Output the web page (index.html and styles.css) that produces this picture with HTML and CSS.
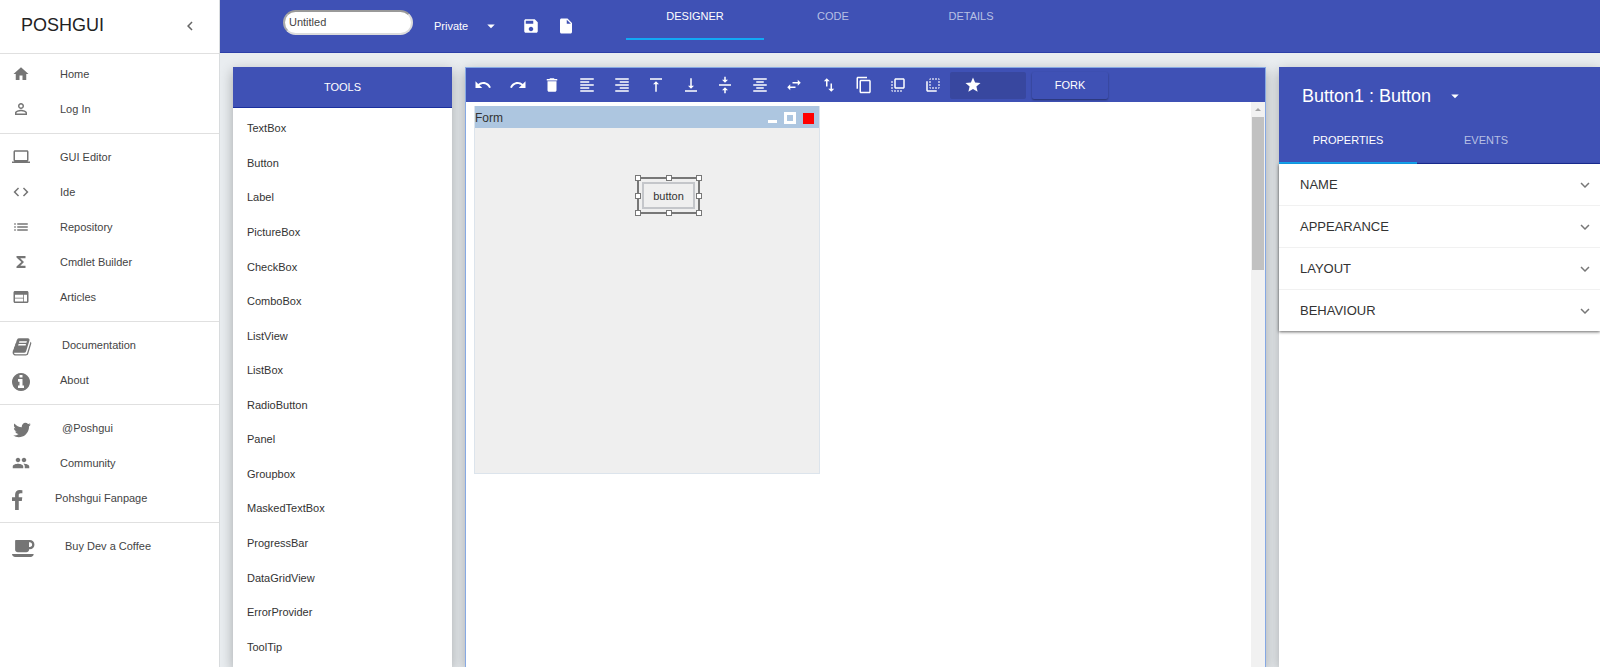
FILE: index.html
```
<!DOCTYPE html>
<html lang="en">
<head>
    <meta charset="UTF-8">
    <meta name="viewport" content="width=device-width, initial-scale=1.0">
    <title>POSHGUI</title>
    <link rel="stylesheet" href="styles.css">
</head>
<body>

    <aside class="sidebar">
        <div class="brand">
            <h1>POSHGUI</h1>
            <button class="icon-btn" aria-label="Collapse menu"><svg class="icon" viewBox="0 0 24 24"><path d="M15.41 7.41L14 6l-6 6 6 6 1.41-1.41L10.83 12z"/></svg></button>
        </div>
        <nav>
            <div class="nav-group nav-first">
                <a href="#"><svg class="icon" viewBox="0 0 24 24"><path d="M10 20v-6h4v6h5v-8h3L12 3 2 12h3v8z"/></svg>Home</a>
                <a href="#"><svg class="icon" viewBox="0 0 24 24"><path d="M12 5.9a2.1 2.1 0 1 1 0 4.2 2.1 2.1 0 0 1 0-4.2m0 9c2.97 0 6.1 1.46 6.1 2.1v1.1H5.9V17c0-.64 3.13-2.1 6.1-2.1M12 4C9.79 4 8 5.79 8 8s1.79 4 4 4 4-1.79 4-4-1.79-4-4-4zm0 9c-2.67 0-8 1.34-8 4v3h16v-3c0-2.66-5.33-4-8-4z"/></svg>Log In</a>
            </div>
            <div class="nav-group">
                <a href="#"><svg class="icon" viewBox="0 0 24 24"><path d="M20 18c1.1 0 1.99-.9 1.99-2L22 5c0-1.1-.9-2-2-2H4c-1.1 0-2 .9-2 2v11c0 1.1.9 2 2 2H0v2h24v-2h-4zM4 5h16v11H4V5z"/></svg>GUI Editor</a>
                <a href="#"><svg class="icon" viewBox="0 0 24 24"><path d="M9.4 16.6L4.8 12l4.6-4.6L8 6l-6 6 6 6 1.4-1.4zm5.2 0l4.6-4.6-4.6-4.6L16 6l6 6-6 6-1.4-1.4z"/></svg>Ide</a>
                <a href="#"><svg class="icon" viewBox="0 0 24 24"><path d="M3 13h2v-2H3v2zm0 4h2v-2H3v2zm0-8h2V7H3v2zm4 4h14v-2H7v2zm0 4h14v-2H7v2zM7 7v2h14V7H7z"/></svg>Repository</a>
                <a href="#"><svg class="icon" viewBox="0 0 24 24"><path d="M18 4H6v2l6.5 6L6 18v2h12v-3h-7l5-5-5-5h7z"/></svg>Cmdlet Builder</a>
                <a href="#"><svg class="icon" viewBox="0 0 24 24"><path d="M20 4H4c-1.1 0-1.99.9-1.99 2L2 18c0 1.1.9 2 2 2h16c1.1 0 2-.9 2-2V6c0-1.1-.9-2-2-2zm-5 14H4v-4h11v4zm0-5H4V9h11v4zm5 5h-4V9h4v9z"/></svg>Articles</a>
            </div>
            <div class="nav-group">
                <a href="#"><svg class="icon fa fa-book" viewBox="50 100 1700 1600"><path d="M1703 478q40 57 18 129l-275 906q-19 64-76.5 107.5t-122.5 43.5h-923q-77 0-148.5-53.5t-99.5-131.5q-24-67-2-127 0-4 3-27t4-37q1-8-3-21.5t-3-19.5q2-11 8-21t16.5-23.5 16.5-23.5q23-38 45-91.5t30-91.5q3-10 .5-30t-.5-28q3-11 17-28t17-23q21-36 42-92t25-90q1-9-2.5-32t.5-28q4-13 22-30.5t22-22.5q19-26 42.5-84.5t27.5-96.5q1-8-3-25.5t-2-26.5q2-8 9-18t18-23 17-21q8-12 16.5-30.5t15-35 16-36 19.5-32 26.5-23.5 36-11.5 47.5 5.5l-1 3q38-9 51-9h761q74 0 114 56t18 130l-274 906q-36 119-71.5 153.5t-128.5 34.5h-869q-27 0-38 15-11 16-1 43 24 70 144 70h923q29 0 56-15.5t35-41.5l300-987q7-22 5-57 38 15 59 43zm-1064 2q-4 13 2 22.5t20 9.5h608q13 0 25.5-9.5t16.5-22.5l21-64q4-13-2-22.5t-20-9.5h-608q-13 0-25.5 9.5t-16.5 22.5zm-83 256q-4 13 2 22.5t20 9.5h608q13 0 25.5-9.5t16.5-22.5l21-64q4-13-2-22.5t-20-9.5h-608q-13 0-25.5 9.5t-16.5 22.5z"/></svg>Documentation</a>
                <a href="#"><svg class="icon fa" viewBox="128 128 1536 1536"><path d="M1152 1376v-160q0-14-9-23t-23-9h-96v-512q0-14-9-23t-23-9h-320q-14 0-23 9t-9 23v160q0 14 9 23t23 9h96v320h-96q-14 0-23 9t-9 23v160q0 14 9 23t23 9h448q14 0 23-9t9-23zm-128-896v-160q0-14-9-23t-23-9h-192q-14 0-23 9t-9 23v160q0 14 9 23t23 9h192q14 0 23-9t9-23zm640 416q0 209-103 385.5t-279.5 279.5-385.5 103-385.5-103-279.5-279.5-103-385.5 103-385.5 279.5-279.5 385.5-103 385.5 103 279.5 279.5 103 385.5z"/></svg>About</a>
            </div>
            <div class="nav-group">
                <a href="#"><svg class="icon fa fa-twitter" viewBox="0 0 1792 1792"><path d="M1684 408q-67 98-162 167 1 14 1 42 0 130-38 259.5t-115.5 248.5-184.5 210.5-258 146-323 54.5q-271 0-496-145 35 4 78 4 225 0 401-138-105-2-188-64.5t-114-159.5q33 5 61 5 43 0 85-11-112-23-185.5-111.5t-73.5-205.5v-4q68 38 146 41-66-44-105-115t-39-154q0-88 44-163 121 149 294.5 238.5t371.5 99.5q-8-38-8-74 0-134 94.5-228.5t228.5-94.5q140 0 236 102 109-21 205-78-37 115-142 178 93-10 186-50z"/></svg>@Poshgui</a>
                <a href="#"><svg class="icon" viewBox="0 0 24 24"><path d="M16 11c1.66 0 2.99-1.34 2.99-3S17.66 5 16 5c-1.66 0-3 1.34-3 3s1.34 3 3 3zm-8 0c1.66 0 2.99-1.34 2.99-3S9.66 5 8 5C6.34 5 5 6.34 5 8s1.34 3 3 3zm0 2c-2.33 0-7 1.17-7 3.5V19h14v-2.5c0-2.33-4.67-3.5-7-3.5zm8 0c-.29 0-.62.02-.97.05 1.16.84 1.97 1.97 1.97 3.45V19h6v-2.5c0-2.33-4.67-3.5-7-3.5z"/></svg>Community</a>
                <a href="#"><svg class="icon fa fa-facebook" viewBox="479 0 1080 1664"><path d="M1343 12v264h-157q-86 0-116 36t-30 108v189h293l-39 296h-254v759h-306v-759h-255v-296h255v-218q0-186 104-288.5t277-102.5q147 0 228 12z"/></svg>Pohshgui Fanpage</a>
            </div>
            <div class="nav-group">
                <a href="#"><svg class="icon fa fa-coffee" viewBox="0 256 1900 1408"><path d="M1664 640q0-80-56-136t-136-56h-64v384h64q80 0 136-56t56-136zm-1664 768h1792q0 106-75 181t-181 75h-1280q-106 0-181-75t-75-181zm1856-768q0 159-112.5 271.5t-271.5 112.5h-64v32q0 92-66 158t-158 66h-704q-92 0-158-66t-66-158v-736q0-26 19-45t45-19h1152q159 0 271.5 112.5t112.5 271.5z"/></svg>Buy Dev a Coffee</a>
            </div>
        </nav>
    </aside>

    <div class="page">
        <header class="topbar">
            <div class="project">
                <input class="project-name" type="text" value="Untitled" aria-label="Project name">
                <div class="dropdown visibility">
                    <select aria-label="Visibility"><option>Private</option><option>Public</option></select>
                    <svg class="icon" viewBox="0 0 24 24"><path d="M7 10l5 5 5-5z"/></svg>
                </div>
                <div class="file-actions">
                    <button class="icon-btn" aria-label="Save"><svg class="icon" viewBox="0 0 24 24"><path d="M17 3H5c-1.11 0-2 .9-2 2v14c0 1.1.89 2 2 2h14c1.1 0 2-.9 2-2V7l-4-4zm-5 16c-1.66 0-3-1.34-3-3s1.34-3 3-3 3 1.34 3 3-1.34 3-3 3zm3-10H5V5h10v4z"/></svg></button>
                    <button class="icon-btn" aria-label="New file"><svg class="icon" viewBox="0 0 24 24"><path d="M6 2c-1.1 0-1.99.9-1.99 2L4 20c0 1.1.89 2 2 2h12c1.1 0 2-.9 2-2V8l-6-6H6zm7 7V3.5L18.5 9H13z"/></svg></button>
                </div>
            </div>
            <div class="tabs">
                <button class="tab active">DESIGNER</button>
                <button class="tab">CODE</button>
                <button class="tab">DETAILS</button>
            </div>
        </header>

        <main class="workspace">
            <section class="panel tools">
                <h2>TOOLS</h2>
                <ul>
                    <li>TextBox</li>
                    <li>Button</li>
                    <li>Label</li>
                    <li>PictureBox</li>
                    <li>CheckBox</li>
                    <li>ComboBox</li>
                    <li>ListView</li>
                    <li>ListBox</li>
                    <li>RadioButton</li>
                    <li>Panel</li>
                    <li>Groupbox</li>
                    <li>MaskedTextBox</li>
                    <li>ProgressBar</li>
                    <li>DataGridView</li>
                    <li>ErrorProvider</li>
                    <li>ToolTip</li>
                </ul>
            </section>

            <section class="panel designer">
                <div class="toolbar">
                    <div class="toolbar-icons">
                        <button class="icon-btn" aria-label="Undo"><svg class="icon" viewBox="0 0 24 24"><path d="M12.5 8c-2.65 0-5.05.99-6.9 2.6L2 7v9h9l-3.62-3.62c1.39-1.16 3.16-1.88 5.12-1.88 3.54 0 6.55 2.31 7.6 5.5l2.37-.78C21.08 11.03 17.15 8 12.5 8z"/></svg></button>
                        <button class="icon-btn" aria-label="Redo"><svg class="icon" viewBox="0 0 24 24"><path d="M18.4 10.6C16.55 8.99 14.15 8 11.5 8c-4.65 0-8.58 3.03-9.96 7.22L3.9 16c1.05-3.19 4.05-5.5 7.6-5.5 1.95 0 3.73.72 5.12 1.88L13 16h9V7l-3.6 3.6z"/></svg></button>
                        <button class="icon-btn" aria-label="Delete"><svg class="icon" viewBox="0 0 24 24"><path d="M6 19c0 1.1.9 2 2 2h8c1.1 0 2-.9 2-2V7H6v12zM19 4h-3.5l-1-1h-5l-1 1H5v2h14V4z"/></svg></button>
                        <button class="icon-btn" aria-label="Align left"><svg class="icon" viewBox="0 0 24 24"><path d="M15 15H3v2h12v-2zm0-8H3v2h12V7zM3 13h18v-2H3v2zm0 8h18v-2H3v2zM3 3v2h18V3H3z"/></svg></button>
                        <button class="icon-btn" aria-label="Align right"><svg class="icon" viewBox="0 0 24 24"><path d="M3 21h18v-2H3v2zm6-4h12v-2H9v2zm-6-4h18v-2H3v2zm6-4h12V7H9v2zM3 3v2h18V3H3z"/></svg></button>
                        <button class="icon-btn" aria-label="Align top"><svg class="icon" viewBox="0 0 24 24"><path d="M8 11h3v10h2V11h3l-4-4-4 4zM4 3v2h16V3H4z"/></svg></button>
                        <button class="icon-btn" aria-label="Align bottom"><svg class="icon" viewBox="0 0 24 24"><path d="M16 13h-3V3h-2v10H8l4 4 4-4zM4 19v2h16v-2H4z"/></svg></button>
                        <button class="icon-btn" aria-label="Align middle"><svg class="icon" viewBox="0 0 24 24"><path d="M8 19h3v4h2v-4h3l-4-4-4 4zm8-14h-3V1h-2v4H8l4 4 4-4zM4 11v2h16v-2H4z"/></svg></button>
                        <button class="icon-btn" aria-label="Align center"><svg class="icon" viewBox="0 0 24 24"><path d="M7 15v2h10v-2H7zm-4 6h18v-2H3v2zm0-8h18v-2H3v2zm4-6v2h10V7H7zM3 3v2h18V3H3z"/></svg></button>
                        <button class="icon-btn" aria-label="Same width"><svg class="icon" viewBox="0 0 24 24"><path d="M6.99 11L3 15l3.99 4v-3H14v-2H6.99v-3zM21 9l-3.99-4v3H10v2h7.01v3L21 9z"/></svg></button>
                        <button class="icon-btn" aria-label="Same height"><svg class="icon" viewBox="0 0 24 24"><path d="M16 17.01V10h-2v7.01h-3L15 21l4-3.99h-3zM9 3L5 6.99h3V14h2V6.99h3L9 3z"/></svg></button>
                        <button class="icon-btn" aria-label="Copy"><svg class="icon" viewBox="0 0 24 24"><path d="M16 1H4c-1.1 0-2 .9-2 2v14h2V3h12V1zm3 4H8c-1.1 0-2 .9-2 2v14c0 1.1.9 2 2 2h11c1.1 0 2-.9 2-2V7c0-1.1-.9-2-2-2zm0 16H8V7h11v14z"/></svg></button>
                        <button class="icon-btn" aria-label="Bring to front"><svg class="icon" viewBox="0 0 24 24"><path d="M3 13h2v-2H3v2zm0 4h2v-2H3v2zm2 4v-2H3c0 1.1.89 2 2 2zM3 9h2V7H3v2zm12 12h2v-2h-2v2zm4-18H9c-1.11 0-2 .9-2 2v10c0 1.1.89 2 2 2h10c1.1 0 2-.9 2-2V5c0-1.1-.9-2-2-2zm0 12H9V5h10v10zm-8 6h2v-2h-2v2zm-4 0h2v-2H7v2z"/></svg></button>
                        <button class="icon-btn" aria-label="Send to back"><svg class="icon" viewBox="0 0 24 24"><path d="M9 7H7v2h2V7zm0 4H7v2h2v-2zm0-8c-1.11 0-2 .9-2 2h2V3zm4 12h-2v2h2v-2zm6-12v2h2c0-1.1-.9-2-2-2zm-6 0h-2v2h2V3zM9 17v-2H7c0 1.1.89 2 2 2zm10-4h2v-2h-2v2zm0-4h2V7h-2v2zm0 8c1.1 0 2-.9 2-2h-2v2zM5 7H3v12c0 1.1.89 2 2 2h12v-2H5V7zm10-2h2V3h-2v2zm0 12h2v-2h-2v2z"/></svg></button>
                    </div>
                    <button class="tool-btn star" aria-label="Star"><svg class="icon" viewBox="0 0 24 24"><path d="M12 17.27L18.18 21l-1.64-7.03L22 9.24l-7.19-.61L12 2 9.19 8.63 2 9.24l5.46 4.73L5.82 21z"/></svg></button>
                    <button class="tool-btn fork">FORK</button>
                </div>
                <div class="stage">
                    <div class="canvas">
                        <div class="form">
                            <div class="form-title">
                                <span>Form</span>
                                <i class="win-min"></i>
                                <i class="win-max"></i>
                                <i class="win-close"></i>
                            </div>
                            <div class="form-body">
                                <div class="selection">
                                    <button class="form-button">button</button>
                                    <i class="handle t l"></i>
                                    <i class="handle t c"></i>
                                    <i class="handle t r"></i>
                                    <i class="handle m l"></i>
                                    <i class="handle m r"></i>
                                    <i class="handle b l"></i>
                                    <i class="handle b c"></i>
                                    <i class="handle b r"></i>
                                </div>
                            </div>
                        </div>
                    </div>
                    <div class="scrollbar">
                        <div class="scroll-arrow"></div>
                        <div class="scroll-thumb"></div>
                    </div>
                </div>
            </section>

            <section class="panel inspector">
                <div class="inspector-head">
                    <div class="dropdown control-name">
                        <select aria-label="Selected control"><option>Button1 : Button</option><option>Form</option></select>
                        <svg class="icon" viewBox="0 0 24 24"><path d="M7 10l5 5 5-5z"/></svg>
                    </div>
                    <div class="tabs">
                        <button class="tab active">PROPERTIES</button>
                        <button class="tab">EVENTS</button>
                    </div>
                </div>
                <div class="accordion">
                    <button>NAME<svg class="icon" viewBox="0 0 24 24"><path d="M16.59 8.59L12 13.17 7.41 8.59 6 10l6 6 6-6z"/></svg></button>
                    <button>APPEARANCE<svg class="icon" viewBox="0 0 24 24"><path d="M16.59 8.59L12 13.17 7.41 8.59 6 10l6 6 6-6z"/></svg></button>
                    <button>LAYOUT<svg class="icon" viewBox="0 0 24 24"><path d="M16.59 8.59L12 13.17 7.41 8.59 6 10l6 6 6-6z"/></svg></button>
                    <button>BEHAVIOUR<svg class="icon" viewBox="0 0 24 24"><path d="M16.59 8.59L12 13.17 7.41 8.59 6 10l6 6 6-6z"/></svg></button>
                </div>
            </section>
        </main>
    </div>

</body>
</html>
```
FILE: styles.css
```
* {
    box-sizing: border-box;
}
body {
    margin: 0;
    display: flex;
    height: 100vh;
    overflow: hidden;
    font-family: "Liberation Sans", Arial, sans-serif;
    font-size: 11px;
    color: #333;
    background: #e9edf0;
}
h1, h2, ul {
    margin: 0;
    padding: 0;
    font-weight: normal;
}
button, select, input {
    font: inherit;
    color: inherit;
}
button {
    padding: 0;
    border: none;
    background: none;
    cursor: pointer;
}
.icon {
    display: block;
    flex: none;
    width: 18px;
    height: 18px;
    fill: currentColor;
}
.icon-btn {
    display: flex;
    align-items: center;
    justify-content: center;
}

/* sidebar */
.sidebar {
    flex: none;
    width: 220px;
    background: white;
    border-right: 1px solid #d9dcde;
}
.brand {
    display: flex;
    align-items: center;
    justify-content: space-between;
    height: 54px;
    padding: 0 20px 2px 21px;
    border-bottom: 1px solid #e0e0e0;
}
.brand h1 {
    font-size: 18px;
    color: #222;
}
.brand .icon {
    color: #666;
}
.nav-group {
    padding: 6px 0;
    border-bottom: 1px solid #e0e0e0;
}
.nav-first {
    padding-top: 3px;
}
.nav-group:last-child {
    border-bottom: none;
}
.nav-group a {
    display: flex;
    align-items: center;
    gap: 30px;
    height: 35px;
    padding: 0 0 2px 12px;
    color: #444;
    text-decoration: none;
}
.nav-group .icon {
    color: #757575;
}
.nav-group .fa {
    margin-top: 5px;
}
.nav-group .fa-book {
    width: 20px;
}
.nav-group .fa-twitter {
    width: 20px;
    height: 20px;
}
.nav-group .fa-facebook {
    width: 13px;
    height: 20px;
}
.nav-group .fa-coffee {
    width: 23px;
    height: 17px;
}

/* top bar */
.page {
    flex: 1;
    min-width: 0;
    display: flex;
    flex-direction: column;
}
.topbar {
    display: flex;
    flex: none;
    height: 53px;
    padding-left: 63px;
    color: white;
    background: #3f51b5;
    border-bottom: 1px solid #2c3fa8;
}
.project {
    display: flex;
    align-items: center;
}
.project-name {
    align-self: flex-start;
    width: 130px;
    height: 25px;
    margin: 10px 21px 0 0;
    padding: 0 4px 2px;
    border: 2px solid #dcdcdc;
    border-top-color: #999;
    border-left-color: #aaa;
    border-radius: 13px;
    background: white;
    color: #444;
}
.dropdown {
    position: relative;
    display: flex;
    align-items: center;
}
.dropdown select {
    width: 100%;
    padding: 0;
    border: none;
    appearance: none;
    background: transparent;
}
.dropdown option {
    color: #333;
}
.dropdown .icon {
    position: absolute;
    right: 0;
    pointer-events: none;
}
.visibility {
    width: 66px;
}
.file-actions {
    display: flex;
    gap: 17px;
    margin: 0 51px 0 22px;
}
.tabs {
    display: flex;
}
.tab {
    width: 138px;
    height: 40px;
    padding-bottom: 6px;
    color: #b8c0e4;
    border-bottom: 2px solid transparent;
}
.tab.active {
    color: white;
    border-color: #12a8f5;
}

/* workspace */
.workspace {
    flex: 1;
    min-height: 0;
    display: grid;
    grid-template-columns: 219px 1fr 321px;
    gap: 13px;
    padding: 14px 0 0 13px;
}
.panel {
    display: flex;
    flex-direction: column;
    min-height: 0;
    background: white;
    box-shadow: 0 4px 12px rgba(0, 0, 0, 0.3);
}
.tools h2 {
    flex: none;
    height: 41px;
    font-size: 11px;
    line-height: 40px;
    text-align: center;
    color: white;
    background: #3f51b5;
    border-bottom: 1px solid #1a2f9e;
}
.tools ul {
    flex: 1;
    display: flex;
    flex-direction: column;
    padding: 3px 14px;
    list-style: none;
}
.tools li {
    flex: 1;
    display: flex;
    align-items: center;
}

/* designer */
.designer {
    border: 1px solid #86a9e4;
    border-bottom: none;
}
.toolbar {
    display: flex;
    flex: none;
    align-items: center;
    height: 34px;
    color: white;
    background: #3f51b5;
}
.toolbar-icons {
    display: grid;
    grid-template-columns: repeat(14, 1fr);
    width: 484px;
}
.tool-btn {
    width: 76px;
    height: 27px;
    border-radius: 2px;
}
.star {
    padding-left: 14px;
    margin-right: 6px;
    background: #38479f;
}
.fork {
    box-shadow: 0 1px 2px rgba(0, 0, 0, 0.4);
}
.stage {
    flex: 1;
    min-height: 0;
    display: flex;
}
.canvas {
    flex: 1;
    padding: 4px 8px;
}
.form {
    width: 346px;
    background: #efefef;
    border: 1px solid #dce4ec;
    border-top: none;
}
.form-title {
    display: flex;
    align-items: center;
    gap: 7px;
    height: 22px;
    padding-right: 5px;
    font-size: 12px;
    background: #adc6e0;
}
.form-title span {
    flex: 1;
    padding-top: 2px;
}
.win-min {
    width: 9px;
    height: 3px;
    margin-top: 9px;
    background: white;
}
.win-max {
    width: 12px;
    height: 12px;
    margin-top: 2px;
    border: 3px solid white;
}
.win-close {
    width: 11px;
    height: 11px;
    margin-top: 2px;
    background: red;
}
.form-body {
    position: relative;
    height: 345px;
}
.selection {
    position: absolute;
    left: 162px;
    top: 49px;
    width: 63px;
    height: 37px;
    padding: 3px;
    border: 2px solid #777;
}
.form-button {
    width: 100%;
    height: 100%;
    border: 2px solid #c4c6ca;
    background: #efefef;
}
.handle {
    position: absolute;
    width: 6px;
    height: 6px;
    border: 1px solid #777;
    background: white;
}
.handle.t { top: -4px; }
.handle.m { top: calc(50% - 3px); }
.handle.b { bottom: -4px; }
.handle.l { left: -4px; }
.handle.c { left: calc(50% - 3px); }
.handle.r { right: -4px; }
.scrollbar {
    display: flex;
    flex-direction: column;
    align-items: center;
    width: 14px;
    background: #f1f1f1;
}
.scroll-arrow {
    width: 0;
    margin: 6px 0;
    border: 3px solid transparent;
    border-top: none;
    border-bottom-color: #a3a3a3;
}
.scroll-thumb {
    width: 12px;
    height: 27%;
    background: #c1c1c1;
}

/* inspector */
.inspector-head {
    color: white;
    background: #3f51b5;
    box-shadow: inset 0 -1px #1a2f9e;
}
.control-name {
    width: 162px;
    height: 57px;
    margin-left: 23px;
    font-size: 18px;
}
.accordion {
    display: grid;
    gap: 1px;
    background: #f1f1f1;
    box-shadow: 0 1px 3px rgba(0, 0, 0, 0.6);
}
.accordion button {
    display: flex;
    align-items: center;
    justify-content: space-between;
    height: 41px;
    padding: 0 6px 0 21px;
    font-size: 13px;
    background: white;
}
.accordion .icon {
    color: #777;
}
```
